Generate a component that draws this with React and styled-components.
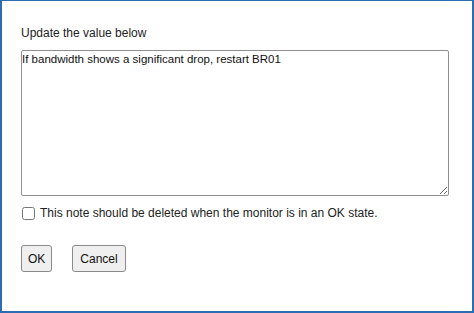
import React from "react";
import styled, { createGlobalStyle } from "styled-components";

const GlobalStyles = createGlobalStyle`
  html, body {
    margin: 0;
    padding: 0;
    background: #fff;
  }
  body {
    font-family: "Liberation Sans", Arial, sans-serif;
    font-size: 12px;
    color: #222;
  }
`;

const Frame = styled.div`
  box-sizing: border-box;
  width: 474px;
  height: 313px;
  border: 2px solid #2b6cb5;
  border-top-width: 1px;
  background: #fff;
  padding: 25px 0 0 19px;
`;

const Label = styled.div`
  font-size: 12px;
  line-height: 15px;
  color: #222;
  margin-bottom: 9px;
`;

const Note = styled.textarea`
  box-sizing: border-box;
  display: block;
  width: 428px;
  height: 146px;
  margin: 0;
  padding: 1px 1px 0 0;
  border: 1px solid #8f8f8f;
  border-radius: 2px;
  font-family: "Liberation Sans", Arial, sans-serif;
  font-size: 11.5px;
  line-height: 14px;
  color: #111;
  resize: both;
`;

const CheckRow = styled.label`
  display: flex;
  align-items: center;
  gap: 5px;
  margin-top: 10px;
  font-size: 12px;
  color: #222;
`;

const Box = styled.input`
  margin: 0 0 0 1px;
  width: 13px;
  height: 13px;
`;

const Actions = styled.div`
  display: flex;
  gap: 20px;
  margin-top: 25px;
`;

const Button = styled.button`
  box-sizing: border-box;
  height: 27px;
  padding: 0 ${(p) => p.$pad}px;
  border: 1px solid #8a8a8a;
  border-radius: 3px;
  background: #efefef;
  font-family: "Liberation Sans", Arial, sans-serif;
  font-size: 12px;
  color: #111;
`;

export default function App() {
  return (
    <>
      <GlobalStyles />
      <Frame>
        <Label>Update the value below</Label>
        <Note defaultValue="If bandwidth shows a significant drop, restart BR01" />
        <CheckRow>
          <Box type="checkbox" />
          This note should be deleted when the monitor is in an OK state.
        </CheckRow>
        <Actions>
          <Button $pad={6}>OK</Button>
          <Button $pad={7}>Cancel</Button>
        </Actions>
      </Frame>
    </>
  );
}
